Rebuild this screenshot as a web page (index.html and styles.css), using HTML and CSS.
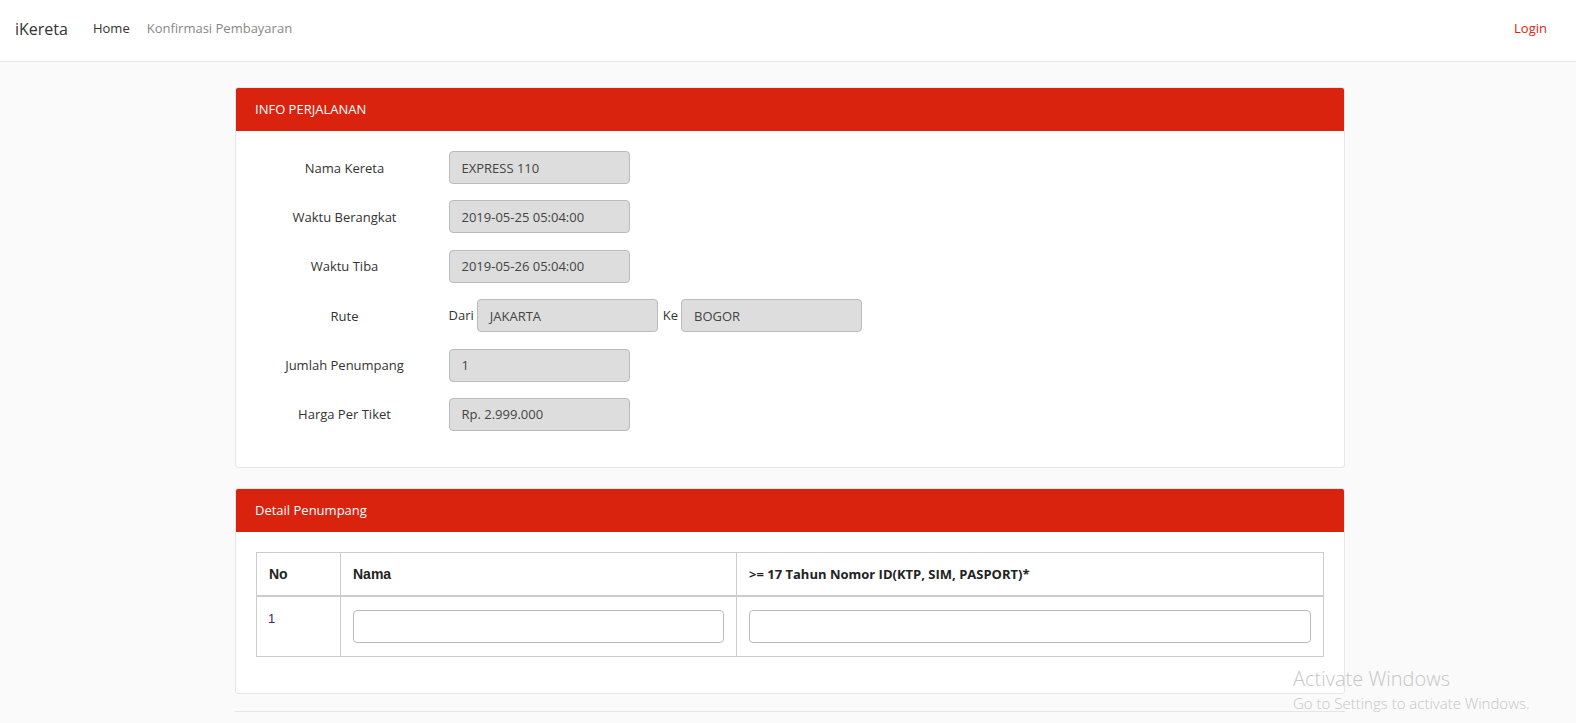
FILE: index.html
```html
<!DOCTYPE html>
<html lang="id">
<head>
<meta charset="utf-8">
<title>iKereta</title>
<link rel="stylesheet" href="styles.css">
</head>
<body>
<nav class="navbar">
  <div class="nav-left">
    <a class="brand" href="#">iKereta</a>
    <a class="nav-link active" href="#">Home</a>
    <a class="nav-link" href="#">Konfirmasi Pembayaran</a>
  </div>
  <a class="nav-login" href="#">Login</a>
</nav>

<main class="container">
  <section class="card card-info">
    <div class="card-head">INFO PERJALANAN</div>
    <div class="card-body info">
      <div class="form-row">
        <label class="form-label">Nama Kereta</label>
        <div class="field">EXPRESS 110</div>
      </div>
      <div class="form-row">
        <label class="form-label">Waktu Berangkat</label>
        <div class="field">2019-05-25 05:04:00</div>
      </div>
      <div class="form-row">
        <label class="form-label">Waktu Tiba</label>
        <div class="field">2019-05-26 05:04:00</div>
      </div>
      <div class="form-row">
        <label class="form-label">Rute</label>
        <div class="route">
          <span class="route-word">Dari</span>
          <div class="field">JAKARTA</div>
          <span class="route-word route-ke">Ke</span>
          <div class="field">BOGOR</div>
        </div>
      </div>
      <div class="form-row">
        <label class="form-label">Jumlah Penumpang</label>
        <div class="field">1</div>
      </div>
      <div class="form-row">
        <label class="form-label">Harga Per Tiket</label>
        <div class="field">Rp. 2.999.000</div>
      </div>
    </div>
  </section>

  <section class="card card-detail">
    <div class="card-head">Detail Penumpang</div>
    <div class="card-body detail">
      <table class="ptable">
        <colgroup>
          <col class="c-no">
          <col class="c-nama">
          <col class="c-id">
        </colgroup>
        <thead>
          <tr>
            <th class="th-arial">No</th>
            <th class="th-arial">Nama</th>
            <th>&gt;= 17 Tahun Nomor ID(KTP, SIM, PASPORT)*</th>
          </tr>
        </thead>
        <tbody>
          <tr>
            <td class="td-no">1</td>
            <td><input class="tinput" type="text"></td>
            <td><input class="tinput" type="text"></td>
          </tr>
        </tbody>
      </table>
    </div>
  </section>

  <hr class="rule">

  <div class="watermark">
    <div class="wm-title">Activate Windows</div>
    <div class="wm-sub">Go to Settings to activate Windows.</div>
  </div>
</main>
</body>
</html>
```

FILE: styles.css
```css
* { box-sizing: border-box; }

html, body {
  margin: 0;
  padding: 0;
  width: 1576px;
  height: 723px;
  overflow: hidden;
}

body {
  font-family: "Open Sans", "Liberation Sans", sans-serif;
  font-size: 13px;
  color: #333;
  background: #fafafa;
}

a { text-decoration: none; }

/* ---------- navbar ---------- */
.navbar {
  height: 62px;
  background: #fff;
  border-bottom: 1px solid #e8e8e8;
  display: flex;
  align-items: center;
  justify-content: space-between;
  padding: 0 29px 5px 15px;
}

.nav-left {
  display: flex;
  align-items: center;
}

.brand {
  font-size: 16px;
  color: #333;
  margin-right: 25px;
  padding-top: 1px;
}

.nav-link {
  color: #888;
  margin-right: 17px;
}

.nav-link.active { color: #333; }

.nav-login {
  color: #d9230f;
}

/* ---------- content ---------- */
.container {
  position: relative;
  width: 1110px;
  margin-left: 235px;
  padding-top: 25px;
}

.card {
  background: #fff;
  border: 1px solid #e6e6e6;
  border-radius: 3px;
  overflow: hidden;
}

.card-info { margin-bottom: 20px; }

.card-head {
  background: #d9230f;
  color: #fff;
  height: 44px;
  display: flex;
  align-items: center;
  padding-left: 20px;
  font-size: 13px;
  margin: -1px -1px 0;
}

.card-body.info {
  padding: 20px 0 36px;
  display: flex;
  flex-direction: column;
  gap: 16.4px;
}

.form-row {
  display: flex;
  align-items: center;
}

.form-label {
  width: 199px;
  margin-left: 9px;
  margin-right: 4.5px;
  text-align: center;
}

.field {
  width: 181px;
  height: 33px;
  background: #dddddd;
  border: 1px solid #bbbbbb;
  border-radius: 4px;
  padding: 0 12px;
  display: flex;
  align-items: center;
  color: #444;
  flex: none;
}

.route {
  display: flex;
  align-items: center;
}

.route-word {
  margin-right: 3px;
  margin-top: -2px;
}

.route-ke {
  margin-left: 5px;
  margin-right: 3px;
}

.card-body.detail {
  padding: 20px 20px 36px;
}

/* ---------- table ---------- */
.ptable {
  width: 100%;
  border-collapse: collapse;
  table-layout: fixed;
}

.c-no { width: 84px; }
.c-nama { width: 396px; }

.ptable th,
.ptable td {
  border: 1px solid #cccccc;
  padding: 0 12px;
  text-align: left;
}

.ptable th {
  height: 44px;
  font-weight: 700;
  font-size: 13px;
  color: #222;
  border-bottom: 2px solid #cccccc;
}

.ptable th.th-arial {
  font-family: "Liberation Sans", Arial, sans-serif;
  font-size: 14px;
}

.ptable td {
  padding: 13px 12px 13px 12px;
  vertical-align: top;
}

.td-no {
  font-family: "Liberation Sans", Arial, sans-serif;
  font-size: 13px;
  color: #44246b;
}

.ptable td.td-no { padding-top: 14px; padding-left: 11px; }

.tinput {
  display: block;
  width: 100%;
  height: 33px;
  border: 1px solid #bbbbbb;
  border-radius: 4px;
  background: #fff;
  font-family: inherit;
  font-size: 13px;
}

.rule {
  border: 0;
  border-top: 1px solid #e6e6e6;
  margin: 17px 0 0;
}

/* ---------- OS watermark overlay ---------- */
.watermark {
  position: absolute;
  left: 1058px;
  top: 607px;
  white-space: nowrap;
  color: #c6c6c6;
  pointer-events: none;
}

.wm-title {
  font-size: 20px;
  font-weight: 300;
  line-height: 20px;
}

.wm-sub {
  font-size: 15px;
  font-weight: 300;
  line-height: 15px;
  margin-top: 7px;
}
```
